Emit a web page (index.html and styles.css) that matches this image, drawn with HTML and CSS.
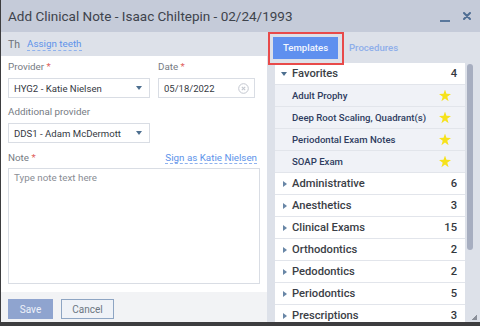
FILE: index.html
```html
<!DOCTYPE html>
<html>
<head>
<meta charset="utf-8">
<link rel="stylesheet" href="styles.css">
</head>
<body>
<div class="window">
  <div class="titlebar">
    <div class="title">Add Clinical Note - Isaac Chiltepin - 02/24/1993</div>
    <div class="win-ctrls">
      <span class="minimize"></span>
      <svg class="close" width="8" height="8" viewBox="0 0 8 8"><path d="M1 1 L7 7 M7 1 L1 7" stroke="#4f6d93" stroke-width="2" stroke-linecap="round"/></svg>
    </div>
  </div>
  <div class="main">
    <div class="left">
      <div class="teethbar">
        <span class="th">Th</span>
        <span class="link">Assign teeth</span>
      </div>
      <div class="form">
        <div class="row2">
          <div class="field provider">
            <div class="label">Provider <span class="req">*</span></div>
            <div class="select"><span>HYG2 - Katie Nielsen</span><span class="caret"></span></div>
          </div>
          <div class="field date">
            <div class="label">Date <span class="req">*</span></div>
            <div class="input"><span>05/18/2022</span>
              <svg class="clear" width="11" height="11" viewBox="0 0 11 11"><circle cx="5.5" cy="5.5" r="4.8" fill="none" stroke="#c3c7cf" stroke-width="1"/><path d="M3.8 3.8 L7.2 7.2 M7.2 3.8 L3.8 7.2" stroke="#c3c7cf" stroke-width="1.1"/></svg>
            </div>
          </div>
        </div>
        <div class="field addl">
          <div class="label">Additional provider</div>
          <div class="select"><span>DDS1 - Adam McDermott</span><span class="caret"></span></div>
        </div>
        <div class="note-head">
          <div class="label">Note <span class="req">*</span></div>
          <span class="link">Sign as Katie Nielsen</span>
        </div>
        <div class="textarea">Type note text here</div>
      </div>
      <div class="footer">
        <div class="btn save">Save</div>
        <div class="btn cancel">Cancel</div>
      </div>
    </div>
    <div class="right">
      <div class="tabs">
        <div class="tab active">Templates</div>
        <div class="tab">Procedures</div>
      </div>
      <div class="highlight"></div>
      <div class="listwrap">
        <div class="list">
          <div class="row cat open"><span class="arr down"></span><span class="name">Favorites</span><span class="count">4</span></div>
          <div class="row sub"><span class="name">Adult Prophy</span><span class="star"></span></div>
          <div class="row sub"><span class="name">Deep Root Scaling, Quadrant(s)</span><span class="star"></span></div>
          <div class="row sub"><span class="name">Periodontal Exam Notes</span><span class="star"></span></div>
          <div class="row sub"><span class="name">SOAP Exam</span><span class="star"></span></div>
          <div class="row cat"><span class="arr"></span><span class="name">Administrative</span><span class="count">6</span></div>
          <div class="row cat"><span class="arr"></span><span class="name">Anesthetics</span><span class="count">3</span></div>
          <div class="row cat"><span class="arr"></span><span class="name">Clinical Exams</span><span class="count">15</span></div>
          <div class="row cat"><span class="arr"></span><span class="name">Orthodontics</span><span class="count">2</span></div>
          <div class="row cat"><span class="arr"></span><span class="name">Pedodontics</span><span class="count">2</span></div>
          <div class="row cat"><span class="arr"></span><span class="name">Periodontics</span><span class="count">5</span></div>
          <div class="row cat"><span class="arr"></span><span class="name">Prescriptions</span><span class="count">3</span></div>
        </div>
        <div class="scroll"><div class="thumb"></div></div>
      </div>
      <div class="grip"></div>
    </div>
  </div>
</div>
</body>
</html>
```

FILE: styles.css
```css
* { box-sizing: border-box; }
html, body { margin: 0; padding: 0; }
body {
  width: 480px; height: 326px; overflow: hidden;
  background: #3d3d3f;
  font-family: Roboto, "Liberation Sans", sans-serif;
  white-space: nowrap;
}
.window {
  margin-left: 1px;
  width: 479px; height: 322px;
  display: flex; flex-direction: column;
  background: #dde1e9;
}
.titlebar {
  height: 32px; flex: none;
  background: #c5cbd9;
  display: flex; align-items: center;
  padding: 0 8px 0 7px;
}
.title { font-size: 13.5px; color: #3e434c; flex: 1; }
.win-ctrls { display: flex; align-items: center; gap: 13px; padding-right: 1px; }
.minimize { width: 10px; height: 2px; background: #5a789c; margin-top: 9px; }
.close { display: block; }
.main { flex: 1; display: flex; min-height: 0; }
.left { width: 266px; flex: none; display: flex; flex-direction: column; }
.teethbar {
  height: 24px; flex: none; display: flex; align-items: center;
  padding-left: 7px; font-size: 10px;
}
.th { color: #6d727a; margin-right: 7px; font-size: 10.5px; }
.link { color: #5d93ea; border-bottom: 1px dashed #8fb2ee; line-height: 12px; font-size: 9.8px; }
.form { flex: 1; background: #fff; padding: 5px 8px 0 7px; overflow: hidden; min-height: 0; }
.label { font-size: 9.8px; color: #767b83; height: 12px; line-height: 12px; }
.req { color: #e06060; }
.row2 { display: flex; gap: 8px; }
.field .label { margin-bottom: 5px; }
.select, .input {
  height: 20px; border: 1px solid #d9dde4; display: flex; align-items: center;
  padding: 0 7px 0 5px; font-size: 9.6px; color: #35393f; justify-content: space-between;
}
.provider .select { width: 142px; }
.date .input { width: 97px; font-size: 9.5px; }
.addl { margin-top: 8px; }
.addl .select { width: 142px; }
.caret { width: 0; height: 0; border-left: 3.5px solid transparent; border-right: 3.5px solid transparent; border-top: 4px solid #4d6f8f; }
.clear { display: block; margin-right: -2px; }
.note-head { display: flex; justify-content: space-between; align-items: flex-start; margin-top: 9px; padding-right: 2px; }
.note-head .link { line-height: 11px; }
.textarea {
  margin-top: 4px; height: 116px; width: 252px; border: 1px solid #d9dde4;
  padding: 3px 5px; font-size: 9.8px; color: #8a8e95;
}
.footer {
  height: 30px; flex: none; background: #f2f3f5;
  display: flex; align-items: flex-start; gap: 8px; padding: 7px 0 0 7px;
}
.btn { height: 20px; display: flex; align-items: center; justify-content: center; font-size: 10px; }
.save { width: 45px; background: #8fa4cf; color: #eef2fa; }
.cancel { width: 53px; border: 1px solid #8ea5c3; background: #eff2f7; color: #6c7682; }
.right { flex: 1; position: relative; display: flex; flex-direction: column; }
.tabs { height: 31px; flex: none; display: flex; align-items: flex-start; padding: 5px 0 0 6px; gap: 11px; }
.tab { font-size: 9.6px; height: 22px; line-height: 22px; color: #8eaeea; font-weight: 500; }
.tab.active { background: #5f90ef; color: #f4f7fd; width: 65px; text-align: center; }
.highlight {
  position: absolute; left: 1px; top: 0; width: 76px; height: 33px;
  border: 2px solid #e84a4a;
}
.listwrap { flex: 1; display: flex; padding-left: 8px; min-height: 0; }
.list { width: 190px; overflow: hidden; }
.row { height: 22px; display: flex; align-items: center; border-bottom: 1px solid #e2e5eb; padding-right: 8px; }
.cat { background: #fff; font-size: 11.2px; color: #3a3e46; font-weight: 500; }
.cat .name { flex: 1; }
.arr { width: 17px; height: 22px; position: relative; flex: none; }
.arr::after {
  content: ""; position: absolute; left: 8px; top: 8px;
  border-top: 3px solid transparent; border-bottom: 3px solid transparent; border-left: 4px solid #6886a6;
}
.arr.down::after {
  left: 6px; top: 9px;
  border-left: 3px solid transparent; border-right: 3px solid transparent; border-top: 4px solid #4d6f8f; border-bottom: 0;
}
.count { font-weight: 500; color: #33373d; }
.sub { background: #f0f2f7; font-size: 9.6px; color: #2e3c60; font-weight: 500; padding-left: 17px; padding-right: 14px; }
.sub .name { flex: 1; }
.star {
  width: 12px; height: 12px; flex: none;
  background: #f6e21b;
  clip-path: polygon(50% 0%, 62% 36%, 100% 38%, 69% 60%, 80% 97%, 50% 75%, 20% 97%, 31% 60%, 0% 38%, 38% 36%);
}
.scroll { width: 13px; padding: 1px 0 0 2px; }
.thumb { width: 6px; height: 186px; background: #a7aec0; border-radius: 3px; }
.grip {
  position: absolute; right: 3px; bottom: 2px; width: 5px; height: 5px;
  background: linear-gradient(135deg, transparent 50%, #8a8f99 50%);
}
```
